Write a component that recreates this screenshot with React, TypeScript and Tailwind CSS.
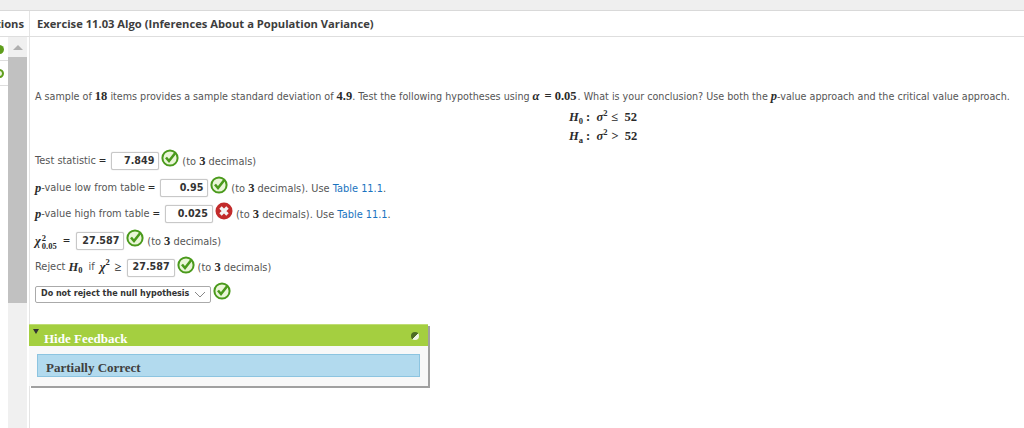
const sans = "font-['DejaVu_Sans',sans-serif]";

function Check({ className = "" }: { className?: string }) {
  return (
    <svg width="18" height="18" viewBox="0 0 18 18" className={`shrink-0 ${className}`}>
      <circle cx="9" cy="9" r="7.6" fill="#eaf6d8" stroke="#4a9a1c" strokeWidth="2" />
      <path d="M5 8.5 L8 12 L14.5 3.8" fill="none" stroke="#4a9a1c" strokeWidth="2.6" />
    </svg>
  );
}

function Cross({ className = "" }: { className?: string }) {
  return (
    <svg width="18" height="18" viewBox="0 0 18 18" className={`shrink-0 ${className}`}>
      <circle cx="9" cy="9" r="8.5" fill="#c22b2b" />
      <path d="M5.5 5.5 L12.5 12.5 M12.5 5.5 L5.5 12.5" stroke="#f4f4f4" strokeWidth="3.4" />
    </svg>
  );
}

function M({ children, i = false }: { children: React.ReactNode; i?: boolean }) {
  return (
    <span className={`font-['Liberation_Serif',serif] font-bold text-[12.5px] text-[#2a2a2a] ${i ? "italic" : ""}`}>
      {children}
    </span>
  );
}

function Box({ children }: { children: React.ReactNode }) {
  return (
    <span className="w-[48px] h-[18px] shrink-0 border border-[#c8c8c8] rounded-[2px] bg-white shadow-[0_0_1px_#bbb] flex items-center justify-end pr-[4px] font-bold text-[#333] text-[9.6px]">
      {children}
    </span>
  );
}

function Row({ children }: { children: React.ReactNode }) {
  return <div className="h-[26.6px] flex items-center whitespace-nowrap">{children}</div>;
}

function Sub({ children }: { children: React.ReactNode }) {
  return <span className="font-['Liberation_Serif',serif] font-bold text-[#2a2a2a] text-[8.5px] relative top-[3px]">{children}</span>;
}

function Sup({ children }: { children: React.ReactNode }) {
  return <span className="font-['Liberation_Serif',serif] font-bold text-[#2a2a2a] text-[8.5px] relative -top-[5px]">{children}</span>;
}

export default function App() {
  return (
    <div className={`w-[1024px] h-[428px] overflow-hidden bg-white flex flex-col text-[9.8px] text-[#555] ${sans}`}>
      <div className="h-[11px] bg-[#efefef] border-b border-[#d9d9d9] shrink-0" />
      <div className="h-[26px] flex border-b border-[#dedede] shrink-0">
        <div className="w-[30px] border-r border-[#e4e4e4] flex justify-end items-center pr-[5px] overflow-hidden pt-[1px]">
          <span className="font-['Open_Sans',sans-serif] font-bold text-[11.2px] text-[#3d3d3d]">tions</span>
        </div>
        <div className="pl-[7px] pt-[1px] flex items-center font-['Open_Sans',sans-serif] font-bold text-[11.2px] text-[#3d3d3d]">
          Exercise 11.03 Algo (Inferences About a Population Variance)
        </div>
      </div>
      <div className="flex flex-1 min-h-0">
        <div className="w-[30px] border-r border-[#e4e4e4] flex shrink-0">
          <div className="w-[8px] flex flex-col overflow-hidden">
            <div className="h-[24px] border-b border-[#ddd] flex items-center justify-start pt-[1px]">
              <span className="w-[9px] h-[9px] rounded-full bg-[#5f9e1c] shrink-0 -ml-[5px]" />
            </div>
            <div className="h-[25px] border-b border-[#ddd] flex items-center justify-start">
              <span className="w-[9px] h-[9px] rounded-full bg-[#eef5e0] border-2 border-[#5f9e1c] shrink-0 -ml-[5px]" />
            </div>
          </div>
          <div className="w-[19px] bg-[#f0f0f0] flex flex-col">
            <div className="h-[20px] flex items-center justify-center">
              <span className="w-0 h-0 border-x-[5px] border-x-transparent border-b-[5px] border-b-[#b0b0b0]" />
            </div>
            <div className="h-[246px] bg-[#c1c1c1]" />
          </div>
        </div>
        <div className="flex-1 pl-[5px] min-w-0">
          <div className="pt-[52px] h-[68px] whitespace-nowrap text-[9.6px] leading-[14px]">
            A sample of <M>18</M> items provides a sample standard deviation of <M>4.9</M>. Test the following hypotheses using <M i>α</M><span className="ml-[5px] mr-[3px]"><M>=</M></span><span className="mr-[1px]"><M>0.05</M></span>. What is your conclusion? Use both the <M i>p</M>-value approach and the critical value approach.
          </div>
          <div className="pl-[534px] h-[48px] flex flex-col pt-[3px] gap-[1px]">
            <div className="h-[18px] leading-[18px] whitespace-nowrap"><M i>H</M><Sub>0</Sub><M>&nbsp;:&nbsp;&nbsp;</M><M i>σ</M><Sup>2</Sup><span className="ml-[4px] mr-[6px]"><M>≤</M></span><M>52</M></div>
            <div className="h-[18px] leading-[18px] whitespace-nowrap"><M i>H</M><Sub>a</Sub><M>&nbsp;:&nbsp;&nbsp;</M><M i>σ</M><Sup>2</Sup><span className="ml-[4px] mr-[6px]"><M>&gt;</M></span><M>52</M></div>
          </div>
          <div className="-mt-[5px]">
            <Row>
              <span>Test statistic</span><M>&nbsp;=&nbsp;</M><span className="w-[2px]" />
              <Box>7.849</Box>
              <Check className="ml-[2px] -mt-[6px]" />
              <span className="ml-[3px]">(to <M>3</M> decimals)</span>
            </Row>
            <Row>
              <M i>p</M><span>-value low from table</span><M>&nbsp;=&nbsp;</M><span className="w-[2px]" />
              <Box>0.95</Box>
              <Check className="ml-[2px] -mt-[6px]" />
              <span className="ml-[3px]">(to <M>3</M> decimals). Use <span className="text-[#1a73c0]">Table 11.1</span>.</span>
            </Row>
            <Row>
              <M i>p</M><span>-value high from table</span><M>&nbsp;=&nbsp;</M><span className="w-[2px]" />
              <Box>0.025</Box>
              <Cross className="ml-[2px] -mt-[6px]" />
              <span className="ml-[3px]">(to <M>3</M> decimals). Use <span className="text-[#1a73c0]">Table 11.1</span>.</span>
            </Row>
            <Row>
              <M i>χ</M>
              <span className="flex flex-col font-['Liberation_Serif',serif] font-bold text-[#2a2a2a] text-[8.5px] leading-[8px] pt-[1px] ml-[1px]"><span>2</span><span>0.05</span></span>
              <M>&nbsp;&nbsp;=&nbsp;&nbsp;</M>
              <Box>27.587</Box>
              <Check className="ml-[2px] -mt-[6px]" />
              <span className="ml-[3px]">(to <M>3</M> decimals)</span>
            </Row>
            <Row>
              <span>Reject&nbsp;</span><M i>H</M><Sub>0</Sub><span className="ml-[6px] mr-[5px]">if</span><M i>χ</M><Sup>2</Sup><span className="ml-[5px] mr-[5px]"><M>≥</M></span>
              <Box>27.587</Box>
              <Check className="ml-[2px] -mt-[6px]" />
              <span className="ml-[3px]">(to <M>3</M> decimals)</span>
            </Row>
            <Row>
              <span className="w-[176px] h-[17px] shrink-0 border border-[#aaa] rounded-[2px] flex items-center justify-between pl-[5px] pr-[4px] font-bold text-[8px] text-[#333]">
                Do not reject the null hypothesis
                <svg width="12" height="7" viewBox="0 0 12 7"><path d="M1 1 L6 6 L11 1" fill="none" stroke="#888" strokeWidth="1" /></svg>
              </span>
              <Check className="ml-[2px] -mt-[6px]" />
            </Row>
          </div>
          <div className="-ml-[6px] mt-[16px] w-[399px] h-[62px] shadow-[2px_2px_0_#a0a0a0] bg-[#f8f8f8] flex flex-col font-['Liberation_Serif',serif] font-bold">
            <div className="h-[22px] bg-[#a4cf40] border-t border-[#c0dd74] flex items-center justify-between pl-[4px] pr-[9px] text-white text-[13px]">
              <span className="flex items-center gap-[5px]">
                <span className="w-0 h-0 border-x-[3px] border-x-transparent border-t-[5px] border-t-[#333] -mt-[8px]" />
                <span className="pt-[8px]">Hide Feedback</span>
              </span>
              <span className="w-[8px] h-[8px] rounded-full bg-[linear-gradient(135deg,#4d6b22_55%,#f0f4e4_55%)] mt-[1px]" />
            </div>
            <div className="mx-[8px] mt-[8px] h-[23px] bg-[#b2daee] border border-[#8cc4e0] flex items-center pl-[8px] pt-[6px] text-[13px] text-[#404040]">
              Partially Correct
            </div>
          </div>
        </div>
      </div>
    </div>
  );
}
